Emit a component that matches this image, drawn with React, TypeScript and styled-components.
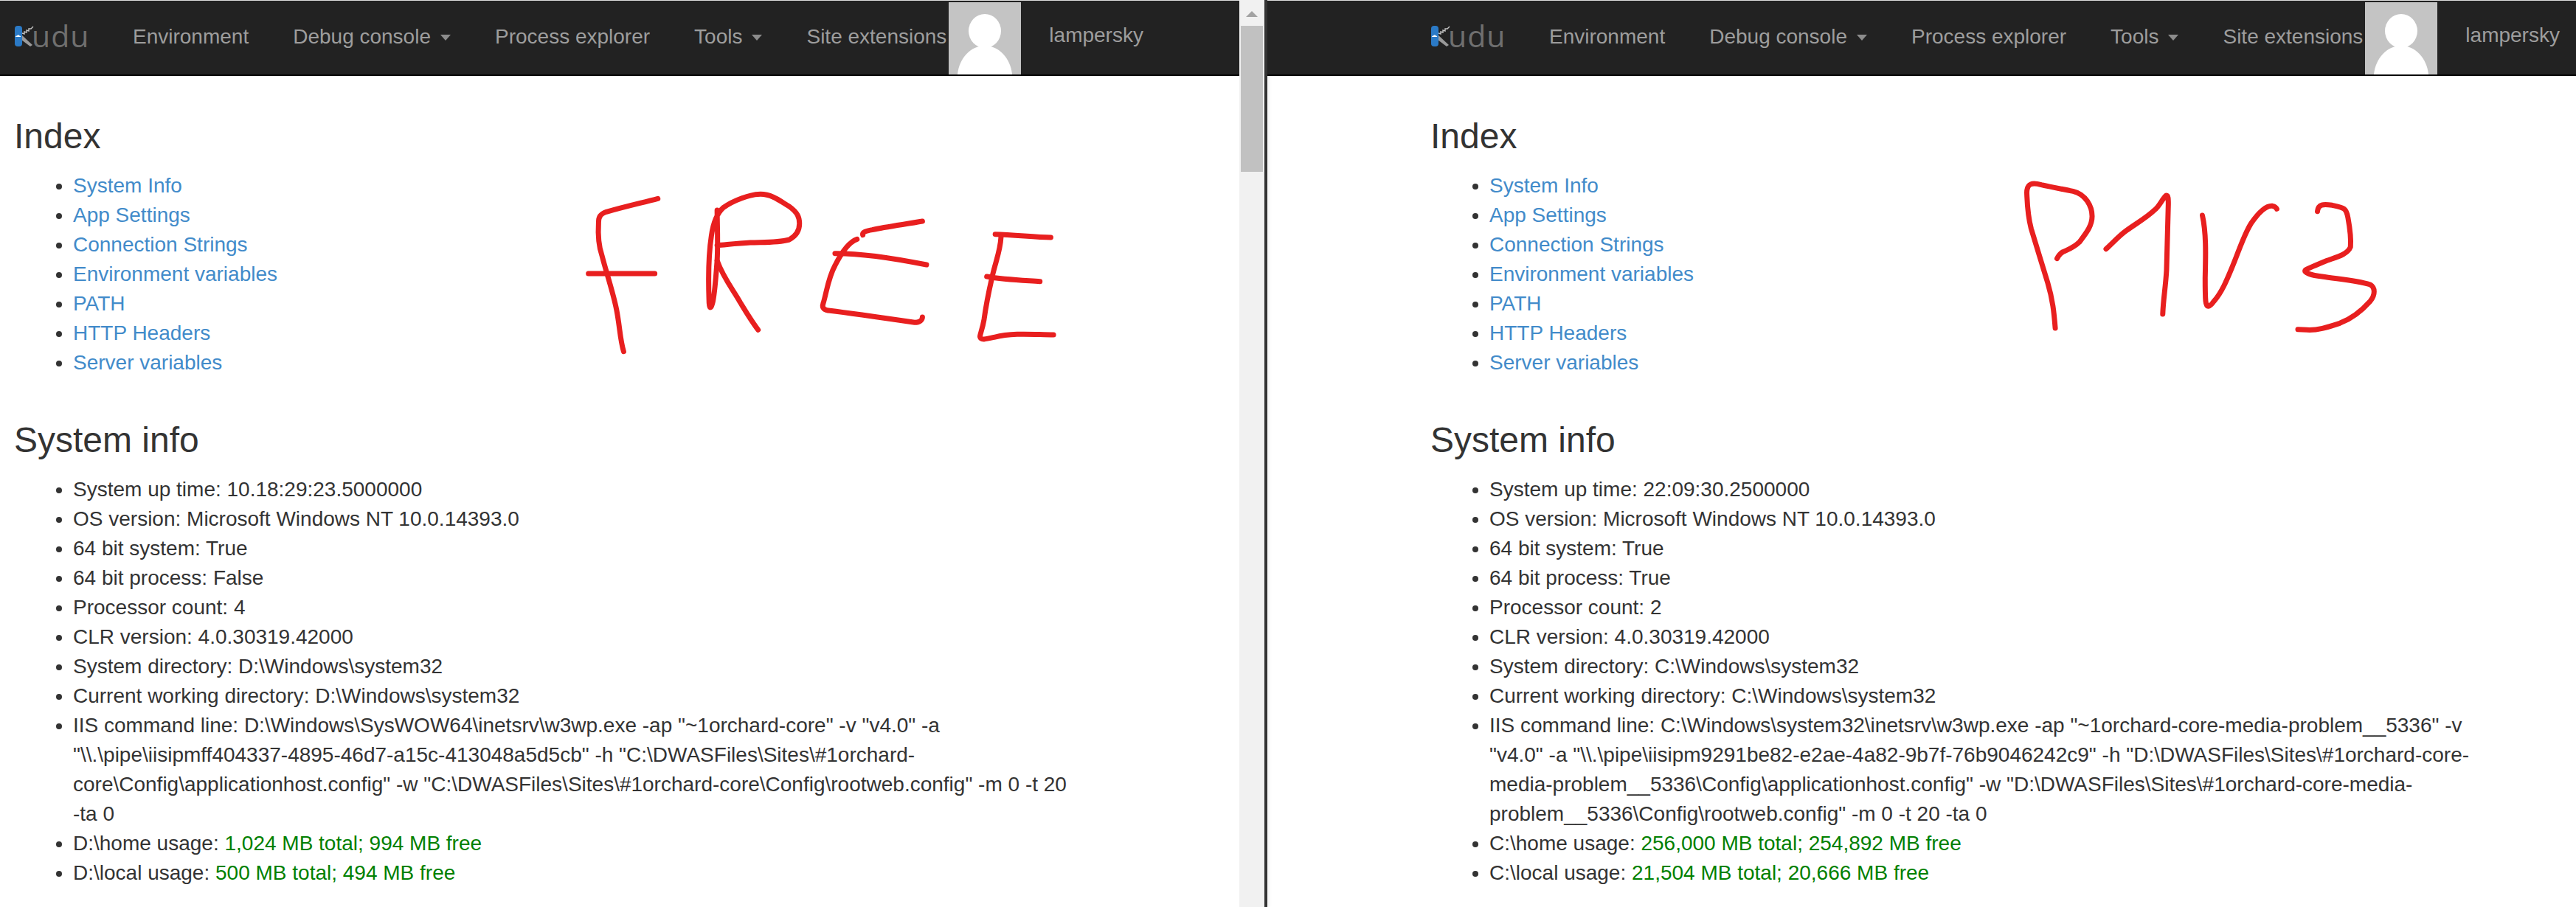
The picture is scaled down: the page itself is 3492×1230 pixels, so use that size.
import React from "react"
import styled, { createGlobalStyle } from "styled-components"

const GlobalStyle = createGlobalStyle`
  html, body {
    margin: 0;
    padding: 0;
    background: #fff;
    overflow: hidden;
  }
  body {
    font-family: "Liberation Sans", Arial, sans-serif;
    font-size: 28px;
    line-height: 40px;
    color: #333;
  }
`

const Screen = styled.div`
  display: flex;
  width: 3492px;
  height: 1230px;
  overflow: hidden;
`

const Pane = styled.div<{ $width: number }>`
  position: relative;
  flex: none;
  width: ${(p) => p.$width}px;
  height: 1230px;
  overflow: hidden;
`

const Navbar = styled.nav<{ $inset: number }>`
  display: flex;
  align-items: stretch;
  box-sizing: border-box;
  height: 103px;
  padding-left: ${(p) => p.$inset}px;
  background: #222;
  border-top: 1px solid #dcdcdc;
  border-bottom: 2px solid #000;
`

const Brand = styled.div`
  display: flex;
  align-items: center;
  flex: none;
  box-sizing: border-box;
  width: 150px;
  padding: 0 0 2px 20px;
`

const BrandText = styled.span`
  margin: 0 0 5px -3px;
  font-family: "Open Sans", sans-serif;
  font-size: 41px;
  line-height: 50px;
  letter-spacing: 1px;
  color: #6f6f6f;
`

const NavItem = styled.a`
  display: flex;
  align-items: center;
  flex: none;
  padding: 0 30px 2px;
  color: #9d9d9d;
`

const Caret = styled.span`
  width: 0;
  height: 0;
  margin: 2px 0 0 13px;
  border-top: 8px solid #8c8c8c;
  border-left: 7px solid transparent;
  border-right: 7px solid transparent;
`

const Avatar = styled.svg`
  flex: none;
  width: 98px;
  height: 98px;
  margin: 2px 0 0 -27px;
`

const UserName = styled.a`
  display: flex;
  align-items: center;
  flex: none;
  margin-left: 38px;
  padding-bottom: 6px;
  color: #9d9d9d;
`

const Content = styled.main<{ $inset: number }>`
  box-sizing: border-box;
  width: ${(p) => p.$inset + 1460}px;
  padding: 56px 0 0 ${(p) => p.$inset + 19}px;
`

const Heading = styled.h3`
  margin: 0 0 20px;
  font-size: 48px;
  font-weight: 500;
  line-height: 52.8px;
`

const List = styled.ul`
  margin: 0 0 59px;
  padding-left: 80px;
`

const Link = styled.a`
  color: #428bca;
`

const Usage = styled.span`
  color: green;
`

const Track = styled.div`
  display: flex;
  flex-direction: column;
  align-items: center;
  flex: none;
  width: 34px;
  height: 1230px;
  background: #f1f1f1;
`

const ArrowUp = styled.span`
  width: 0;
  height: 0;
  margin-top: 15px;
  border-bottom: 8px solid #a3a3a3;
  border-left: 8px solid transparent;
  border-right: 8px solid transparent;
`

const Thumb = styled.div`
  width: 30px;
  height: 198px;
  margin-top: 12px;
  background: #c1c1c1;
`

const Divider = styled.div`
  flex: none;
  width: 4px;
  height: 1230px;
  background: #333;
  box-shadow: 2px 0 5px rgba(0, 0, 0, 0.07);
`

const Scribble = styled.svg<{ $left: number; $top: number; $width: number }>`
  position: absolute;
  left: ${(p) => p.$left}px;
  top: ${(p) => p.$top}px;
  width: ${(p) => p.$width}px;
  height: 260px;
  overflow: visible;

  path {
    fill: none;
    stroke: #e81f1f;
    stroke-width: 7px;
    stroke-linecap: round;
    stroke-linejoin: round;
    vector-effect: non-scaling-stroke;
  }
`

const indexLinks = [
  "System Info",
  "App Settings",
  "Connection Strings",
  "Environment variables",
  "PATH",
  "HTTP Headers",
  "Server variables",
]

// paths follow the crops of the reference, so the viewBox is stretched back with preserveAspectRatio
const freeStrokes = [
  "M287 118C240 135 190 150 135 172C115 182 112 195 112 215C110 260 112 310 122 350C135 420 155 500 165 570C175 640 175 690 186 740",
  "M82 423L278 423",
  "M462 165C462 230 465 290 462 370C458 440 455 510 448 545C443 570 438 565 438 530C436 450 436 350 445 270C450 220 460 180 480 155C510 125 560 100 590 100C625 100 650 130 675 150C700 175 705 195 705 220C705 250 695 270 675 285C640 298 600 295 560 297C520 300 490 305 462 308",
  "M462 370C480 440 510 490 530 540C550 585 565 620 583 652",
  "M892 266C890 255 900 250 920 245C960 232 1020 222 1068 210",
  "M875 283C850 295 830 335 810 390C790 440 785 500 775 545C770 565 780 573 795 574C860 585 960 605 1045 622C1060 622 1068 612 1068 600",
  "M810 341C900 340 1000 365 1080 387",
  "M1283 263C1340 265 1400 275 1447 276",
  "M1300 275C1298 330 1285 370 1275 430C1265 490 1258 530 1250 610C1245 650 1238 670 1238 680C1240 695 1255 690 1280 682C1340 662 1400 672 1455 672",
  "M1258 435C1310 448 1360 450 1415 455",
]

const p1v3Strokes = [
  "M250 675C245 610 240 560 220 490C200 420 175 340 155 270C140 210 140 170 138 125C138 85 160 82 195 92C230 100 280 110 320 118C370 130 395 180 395 220C395 260 370 290 345 325C320 350 300 355 280 365C268 372 262 382 257 392",
  "M450 353C475 330 500 300 530 278C570 248 610 225 640 195C660 180 670 150 687 135C695 135 695 150 695 170C692 280 690 360 688 440C684 510 675 560 673 618",
  "M829 216C845 290 842 380 840 470C840 510 840 540 842 565C845 595 858 590 875 565C905 530 925 480 945 430C970 370 990 300 1020 250C1050 205 1080 175 1105 178C1115 180 1120 185 1122 190",
  "M1282 200C1285 170 1305 170 1340 175C1385 185 1395 185 1402 225C1410 270 1415 310 1412 345C1400 375 1360 385 1320 400C1285 415 1250 430 1235 438C1225 450 1260 460 1300 465C1360 475 1430 478 1490 498C1510 510 1510 540 1490 565C1460 600 1420 635 1370 655C1320 672 1280 685 1240 682L1205 680",
]

type Site = {
  width: number
  inset: number
  info: string[]
  command: string
  home: [string, string]
  local: [string, string]
  strokes: string[]
  scribble: { left: number; top: number; width: number; viewWidth: number }
}

const freeSite: Site = {
  width: 1680,
  inset: 0,
  info: [
    "System up time: 10.18:29:23.5000000",
    "OS version: Microsoft Windows NT 10.0.14393.0",
    "64 bit system: True",
    "64 bit process: False",
    "Processor count: 4",
    "CLR version: 4.0.30319.42000",
    String.raw`System directory: D:\Windows\system32`,
    String.raw`Current working directory: D:\Windows\system32`,
  ],
  command: String.raw`IIS command line: D:\Windows\SysWOW64\inetsrv\w3wp.exe -ap "~1orchard-core" -v "v4.0" -a "\\.\pipe\iisipmff404337-4895-46d7-a15c-413048a5d5cb" -h "C:\DWASFiles\Sites\#1orchard-core\Config\applicationhost.config" -w "C:\DWASFiles\Sites\#1orchard-core\Config\rootweb.config" -m 0 -t 20 -ta 0`,
  home: [String.raw`D:\home usage: `, "1,024 MB total; 994 MB free"],
  local: [String.raw`D:\local usage: `, "500 MB total; 494 MB free"],
  strokes: freeStrokes,
  scribble: { left: 760, top: 230, width: 720, viewWidth: 1568 },
}

const p1v3Site: Site = {
  width: 1774,
  inset: 202,
  info: [
    "System up time: 22:09:30.2500000",
    "OS version: Microsoft Windows NT 10.0.14393.0",
    "64 bit system: True",
    "64 bit process: True",
    "Processor count: 2",
    "CLR version: 4.0.30319.42000",
    String.raw`System directory: C:\Windows\system32`,
    String.raw`Current working directory: C:\Windows\system32`,
  ],
  command: String.raw`IIS command line: C:\Windows\system32\inetsrv\w3wp.exe -ap "~1orchard-core-media-problem__5336" -v "v4.0" -a "\\.\pipe\iisipm9291be82-e2ae-4a82-9b7f-76b9046242c9" -h "D:\DWASFiles\Sites\#1orchard-core-media-problem__5336\Config\applicationhost.config" -w "D:\DWASFiles\Sites\#1orchard-core-media-problem__5336\Config\rootweb.config" -m 0 -t 20 -ta 0`,
  home: [String.raw`C:\home usage: `, "256,000 MB total; 254,892 MB free"],
  local: [String.raw`C:\local usage: `, "21,504 MB total; 20,666 MB free"],
  strokes: p1v3Strokes,
  scribble: { left: 982, top: 220, width: 540, viewWidth: 1568 },
}

const KuduMark = () => (
  <svg width="26" height="32" viewBox="0 0 26 32">
    <path d="M9 13L24 27L21 29L9 20Z" fill="#9a9a9a" />
    <path
      d="M10 11L13 12L13 9L16 10L16 7L19 8L19 5L22 5L25 2"
      fill="none"
      stroke="#c4c4c4"
      strokeWidth="1.4"
    />
    <rect x="0" y="1" width="10" height="28" rx="4" fill="#2b7ac6" />
    <path
      d="M1 16C1 14.500 2.500 14.500 3 14.500C3.500 13 6 13 6.500 14.500C8 14.500 8.500 15.500 8 16Z"
      fill="#fff"
    />
  </svg>
)

const SiteInfo = ({ site }: { site: Site }) => (
  <Pane $width={site.width}>
    <Navbar $inset={site.inset}>
      <Brand>
        <KuduMark />
        <BrandText>udu</BrandText>
      </Brand>
      <NavItem>Environment</NavItem>
      <NavItem>
        Debug console
        <Caret />
      </NavItem>
      <NavItem>Process explorer</NavItem>
      <NavItem>
        Tools
        <Caret />
      </NavItem>
      <NavItem>Site extensions</NavItem>
      <Avatar viewBox="0 0 98 98">
        <rect width="98" height="98" fill="#c4c4c4" />
        <ellipse cx="49" cy="39" rx="22" ry="23" fill="#fff" />
        <path d="M12 98C14 76 30 59 49 59C68 59 84 76 86 98Z" fill="#fff" />
      </Avatar>
      <UserName>lampersky</UserName>
    </Navbar>
    <Content $inset={site.inset}>
      <Heading>Index</Heading>
      <List>
        {indexLinks.map((label) => (
          <li key={label}>
            <Link>{label}</Link>
          </li>
        ))}
      </List>
      <Heading>System info</Heading>
      <List>
        {site.info.map((line) => (
          <li key={line}>{line}</li>
        ))}
        <li>{site.command}</li>
        <li>
          {site.home[0]}
          <Usage>{site.home[1]}</Usage>
        </li>
        <li>
          {site.local[0]}
          <Usage>{site.local[1]}</Usage>
        </li>
      </List>
    </Content>
    <Scribble
      $left={site.scribble.left}
      $top={site.scribble.top}
      $width={site.scribble.width}
      viewBox={`0 0 ${site.scribble.viewWidth} 780`}
      preserveAspectRatio="none"
    >
      {site.strokes.map((d) => (
        <path key={d} d={d} />
      ))}
    </Scribble>
  </Pane>
)

const App: React.FC = () => (
  <>
    <GlobalStyle />
    <Screen>
      <SiteInfo site={freeSite} />
      <Track>
        <ArrowUp />
        <Thumb />
      </Track>
      <Divider />
      <SiteInfo site={p1v3Site} />
    </Screen>
  </>
)

export default App
